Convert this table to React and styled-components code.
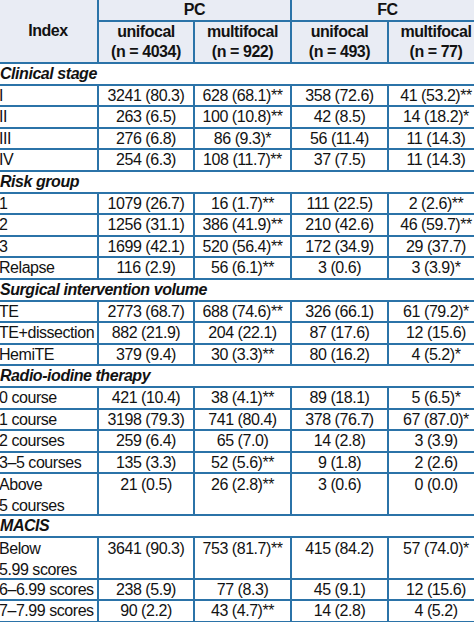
import React from "react";
import styled, { createGlobalStyle } from "styled-components";

const GlobalStyle = createGlobalStyle`
  html, body {
    margin: 0;
    padding: 0;
    background: #ffffff;
    overflow: hidden;
  }
  body {
    font-family: "Liberation Sans", Arial, sans-serif;
    color: #121212;
  }
`;

const LINE = "2px solid #2b73a8";
const COLS = "98px 96px 97px 97px 96px";

const Table = styled.div`
  width: 484px;
  margin-left: -1px;
  font-size: 16px;
  letter-spacing: -0.45px;
`;

const Header = styled.div`
  display: grid;
  grid-template-columns: ${COLS};
  grid-template-rows: 22px 40px;
  height: 64px;
  box-sizing: border-box;
  background: #e9ecf4;
  border-bottom: ${LINE};
  font-weight: bold;
`;

const HeadCell = styled.div`
  display: flex;
  flex-direction: column;
  align-items: center;
  justify-content: center;
  text-align: center;
  line-height: 20px;
  box-sizing: border-box;
  border-left: ${(p) => (p.$first ? "none" : LINE)};
  border-bottom: ${(p) => (p.$under ? LINE : "none")};
  grid-column: ${(p) => p.$col || "auto"};
  grid-row: ${(p) => p.$row || "auto"};
`;

const SectionRow = styled.div`
  height: 21.6px;
  box-sizing: border-box;
  border-bottom: ${LINE};
  padding-left: 1px;
  font-weight: bold;
  font-style: italic;
  line-height: 20px;
  white-space: nowrap;
`;

const Row = styled.div`
  display: grid;
  grid-template-columns: ${COLS};
  height: ${(p) => (p.$tall ? 42 : 21.6)}px;
  box-sizing: border-box;
  border-bottom: ${LINE};
  line-height: ${(p) => (p.$tall ? 21 : 20)}px;
`;

const Label = styled.div`
  padding-left: 0;
  white-space: nowrap;
`;

const Value = styled.div`
  border-left: ${LINE};
  text-align: center;
  white-space: nowrap;
`;

const sections = [
  {
    title: "Clinical stage",
    rows: [
      ["I", "3241 (80.3)", "628 (68.1)**", "358 (72.6)", "41 (53.2)**"],
      ["II", "263 (6.5)", "100 (10.8)**", "42 (8.5)", "14 (18.2)*"],
      ["III", "276 (6.8)", "86 (9.3)*", "56 (11.4)", "11 (14.3)"],
      ["IV", "254 (6.3)", "108 (11.7)**", "37 (7.5)", "11 (14.3)"],
    ],
  },
  {
    title: "Risk group",
    rows: [
      ["1", "1079 (26.7)", "16 (1.7)**", "111 (22.5)", "2 (2.6)**"],
      ["2", "1256 (31.1)", "386 (41.9)**", "210 (42.6)", "46 (59.7)**"],
      ["3", "1699 (42.1)", "520 (56.4)**", "172 (34.9)", "29 (37.7)"],
      ["Relapse", "116 (2.9)", "56 (6.1)**", "3 (0.6)", "3 (3.9)*"],
    ],
  },
  {
    title: "Surgical intervention volume",
    rows: [
      ["TE", "2773 (68.7)", "688 (74.6)**", "326 (66.1)", "61 (79.2)*"],
      ["TE+dissection", "882 (21.9)", "204 (22.1)", "87 (17.6)", "12 (15.6)"],
      ["HemiTE", "379 (9.4)", "30 (3.3)**", "80 (16.2)", "4 (5.2)*"],
    ],
  },
  {
    title: "Radio-iodine therapy",
    rows: [
      ["0 course", "421 (10.4)", "38 (4.1)**", "89 (18.1)", "5 (6.5)*"],
      ["1 course", "3198 (79.3)", "741 (80.4)", "378 (76.7)", "67 (87.0)*"],
      ["2 courses", "259 (6.4)", "65 (7.0)", "14 (2.8)", "3 (3.9)"],
      ["3–5 courses", "135 (3.3)", "52 (5.6)**", "9 (1.8)", "2 (2.6)"],
      [["Above", "5 courses"], "21 (0.5)", "26 (2.8)**", "3 (0.6)", "0 (0.0)"],
    ],
  },
  {
    title: "MACIS",
    rows: [
      [["Below", "5.99 scores"], "3641 (90.3)", "753 (81.7)**", "415 (84.2)", "57 (74.0)*"],
      ["6–6.99 scores", "238 (5.9)", "77 (8.3)", "45 (9.1)", "12 (15.6)"],
      ["7–7.99 scores", "90 (2.2)", "43 (4.7)**", "14 (2.8)", "4 (5.2)"],
    ],
  },
];

const App = () => {
  return (
    <>
      <GlobalStyle />
      <Table>
        <Header>
          <HeadCell $first $row="1 / 3" $col="1">
            Index
          </HeadCell>
          <HeadCell $under $col="2 / 4" $row="1">
            PC
          </HeadCell>
          <HeadCell $under $col="4 / 6" $row="1">
            FC
          </HeadCell>
          <HeadCell $row="2" $col="2">
            <span>unifocal</span>
            <span>(n = 4034)</span>
          </HeadCell>
          <HeadCell $row="2" $col="3">
            <span>multifocal</span>
            <span>(n = 922)</span>
          </HeadCell>
          <HeadCell $row="2" $col="4">
            <span>unifocal</span>
            <span>(n = 493)</span>
          </HeadCell>
          <HeadCell $row="2" $col="5">
            <span>multifocal</span>
            <span>(n = 77)</span>
          </HeadCell>
        </Header>

        {sections.map((s) => (
          <React.Fragment key={s.title}>
            <SectionRow>{s.title}</SectionRow>
            {s.rows.map(([label, ...vals]) => {
              const tall = Array.isArray(label);
              return (
                <Row key={tall ? label.join(" ") : label} $tall={tall}>
                  <Label>
                    {tall ? (
                      <>
                        {label[0]}
                        <br />
                        {label[1]}
                      </>
                    ) : (
                      label
                    )}
                  </Label>
                  {vals.map((v, i) => (
                    <Value key={i}>{v}</Value>
                  ))}
                </Row>
              );
            })}
          </React.Fragment>
        ))}
      </Table>
    </>
  );
};

export default App;
